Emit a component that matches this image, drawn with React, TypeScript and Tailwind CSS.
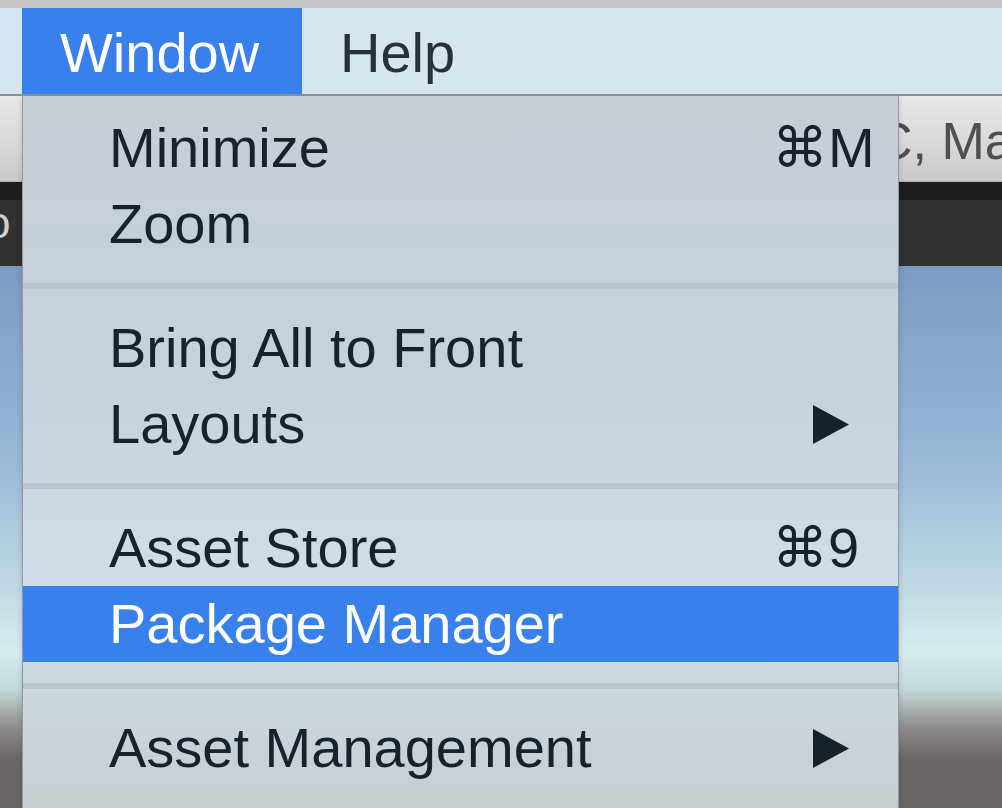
import React from "react";

type Item =
  | { kind: "item"; label: string; shortcut?: string; submenu?: boolean; active?: boolean }
  | { kind: "sep" };

const items: Item[] = [
  { kind: "item", label: "Minimize", shortcut: "⌘M" },
  { kind: "item", label: "Zoom" },
  { kind: "sep" },
  { kind: "item", label: "Bring All to Front" },
  { kind: "item", label: "Layouts", submenu: true },
  { kind: "sep" },
  { kind: "item", label: "Asset Store", shortcut: "⌘9" },
  { kind: "item", label: "Package Manager", active: true },
  { kind: "sep" },
  { kind: "item", label: "Asset Management", submenu: true },
];

function SubmenuArrow({ white }: { white?: boolean }) {
  return (
    <svg width="36" height="39" viewBox="0 0 36 39" className="block">
      <polygon points="0,0 36,19.5 0,39" fill={white ? "#ffffff" : "#16212c"} />
    </svg>
  );
}

export default function App() {
  return (
    <div className="relative w-[1002px] h-[808px] overflow-hidden font-['Liberation_Sans','DejaVu_Sans',sans-serif] text-[56px]">
      {/* Top strip */}
      <div className="h-[8px] bg-[#c6c6c6]" />

      {/* Menu bar */}
      <div className="h-[88px] bg-[#d6e6ee] border-b-2 border-[#87949d] flex items-stretch pl-[22px]">
        <div className="bg-[#3880ec] text-white px-[38px] pt-[2px] leading-[86px] w-[280px]">Window</div>
        <div className="text-[#26323a] pl-[38px] pt-[2px] leading-[86px]">Help</div>
      </div>

      {/* Desktop behind the menu */}
      <div className="flex flex-col h-[712px]">
        <div className="h-[86px] bg-[linear-gradient(180deg,#e8e8e8_0%,#d8d8d8_60%,#c9c9c9_100%)] border-b border-[#b0b0b0] flex items-center">
          <div className="ml-[899px] flex-1 overflow-hidden">
            <span className="block -ml-[24px] pt-[4px] text-[52px] text-[#4f4f4f] whitespace-nowrap">C, Mac</span>
          </div>
        </div>
        <div className="h-[18px] bg-[#1d1d1d]" />
        <div className="h-[66px] bg-[#313131] flex items-start">
          <span className="-ml-[14px] -mt-[10px] text-[44px] text-[#d0d0d0]">o</span>
        </div>
        <div className="flex-1 bg-[linear-gradient(180deg,#7d9ac3_0%,#9ab7d6_35%,#bdd8e3_58%,#d4eded_71%,#c5dada_78%,#8f8d8d_85%,#6b6666_91%,#6b6666_100%)]" />
      </div>

      {/* Window menu */}
      <div className="absolute left-[22px] top-[96px] w-[877px] bottom-0 border-x border-[#8e9aa6] bg-[linear-gradient(180deg,#c9cdd4_0%,#c4d2df_40%,#cfdee8_68%,#ccd6dc_85%,#c8cdd0_100%)] pt-[14px] shadow-[0_2px_6px_rgba(0,0,0,0.15)]">
        {items.map((it, i) =>
          it.kind === "sep" ? (
            <div key={i} className="h-[48px] flex items-center">
              <div className="h-[6px] w-full bg-[#b7c3ce]" />
            </div>
          ) : (
            <div
              key={i}
              className={`h-[76px] flex items-center pl-[86px] leading-[76px] ${
                it.active ? "bg-[#3881ec] text-white" : "text-[#18222d]"
              }`}
            >
              <span className="flex-1 whitespace-nowrap">{it.label}</span>
              <div className="w-[126px] flex items-center">
                {it.shortcut && <span className="whitespace-nowrap">{it.shortcut}</span>}
                {it.submenu && (
                  <div className="ml-[41px]">
                    <SubmenuArrow white={it.active} />
                  </div>
                )}
              </div>
            </div>
          )
        )}
      </div>
    </div>
  );
}
